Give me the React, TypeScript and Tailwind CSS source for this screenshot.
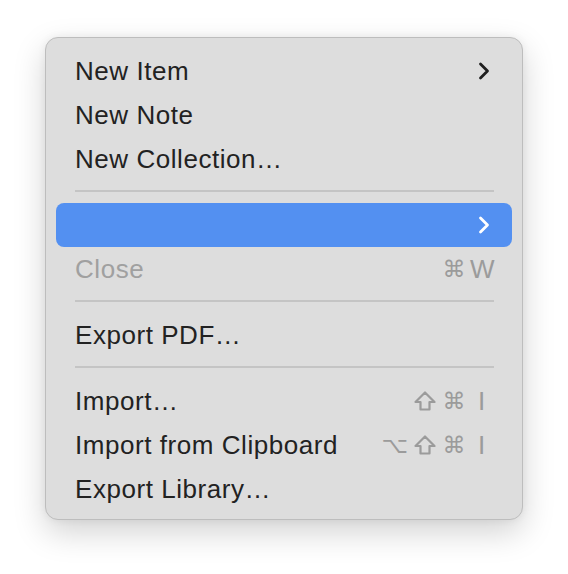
import React from "react";

// macOS-style context menu, 2x scale
type Row =
  | { kind: "item"; label: string; submenu?: boolean; active?: boolean; disabled?: boolean; mods?: string[]; keyChar?: string }
  | { kind: "sep" };

const rows: Row[] = [
  { kind: "item", label: "New Item", submenu: true },
  { kind: "item", label: "New Note" },
  { kind: "item", label: "New Collection…" },
  { kind: "sep" },
  { kind: "item", label: "", submenu: true, active: true },
  { kind: "item", label: "Close", disabled: true, mods: ["cmd"], keyChar: "W" },
  { kind: "sep" },
  { kind: "item", label: "Export PDF…" },
  { kind: "sep" },
  { kind: "item", label: "Import…", mods: ["shift", "cmd"], keyChar: "I" },
  { kind: "item", label: "Import from Clipboard", mods: ["opt", "shift", "cmd"], keyChar: "I" },
  { kind: "item", label: "Export Library…" },
];

function Chevron({ white }: { white?: boolean }) {
  return (
    <svg width="12" height="18" viewBox="0 0 12 18" fill="none">
      <polyline
        points="2.5,2 9.5,9 2.5,16"
        stroke={white ? "#ffffff" : "#1f1f1f"}
        strokeWidth="2.8"
        strokeLinecap="round"
        strokeLinejoin="round"
      />
    </svg>
  );
}

function Mod({ name }: { name: string }) {
  if (name === "shift") {
    return (
      <svg width="22" height="20" viewBox="0 0 22 20" fill="none">
        <path
          d="M11 1.5 L20.5 11 H15.5 V18.5 H6.5 V11 H1.5 Z"
          stroke="#9b9b9b"
          strokeWidth="2.2"
          strokeLinejoin="round"
        />
      </svg>
    );
  }
  return (
    <span className="font-['DejaVu_Sans',_sans-serif] text-[23px] leading-none">
      {name === "cmd" ? "⌘" : "⌥"}
    </span>
  );
}

export default function App() {
  return (
    <div className="min-h-[574px] w-[568px] bg-white pl-[45px] pt-[37px] font-['Liberation_Sans',_Arial,_sans-serif]">
      <div className="w-[478px] rounded-[13px] border border-[#bdbdbd] bg-[#dddddd] px-[10px] pb-[8px] pt-[11px] shadow-[0_12px_32px_rgba(0,0,0,0.18),0_0_8px_rgba(0,0,0,0.06)]">
        {rows.map((r, i) =>
          r.kind === "sep" ? (
            <div key={i} className="h-[22px] pl-[19px] pr-[18px] pt-[9px]">
              <div className="h-[2px] bg-[#c4c4c4]" />
            </div>
          ) : (
            <div
              key={i}
              className={
                "flex h-[44px] items-center rounded-[8px] pl-[19px] text-[26px] leading-[44px] tracking-[0.55px] " +
                (r.active ? "bg-[#5390f1] text-white " : "") +
                (r.disabled ? "text-[#a0a0a0]" : r.active ? "" : "text-[#222222]")
              }
            >
              <span className="flex-1 whitespace-nowrap">{r.label}</span>
              {r.submenu && (
                <span className="mr-[22px] flex items-center">
                  <Chevron white={r.active} />
                </span>
              )}
              {r.keyChar && r.mods && (
                <span className="mr-[18px] flex items-center text-[#9b9b9b]">
                  <span className="flex items-center gap-[6px]">
                    {r.mods.map((m) => (
                      <Mod key={m} name={m} />
                    ))}
                  </span>
                  <span className="w-[28px] pl-[4px] text-center">{r.keyChar}</span>
                </span>
              )}
            </div>
          )
        )}
      </div>
    </div>
  );
}
